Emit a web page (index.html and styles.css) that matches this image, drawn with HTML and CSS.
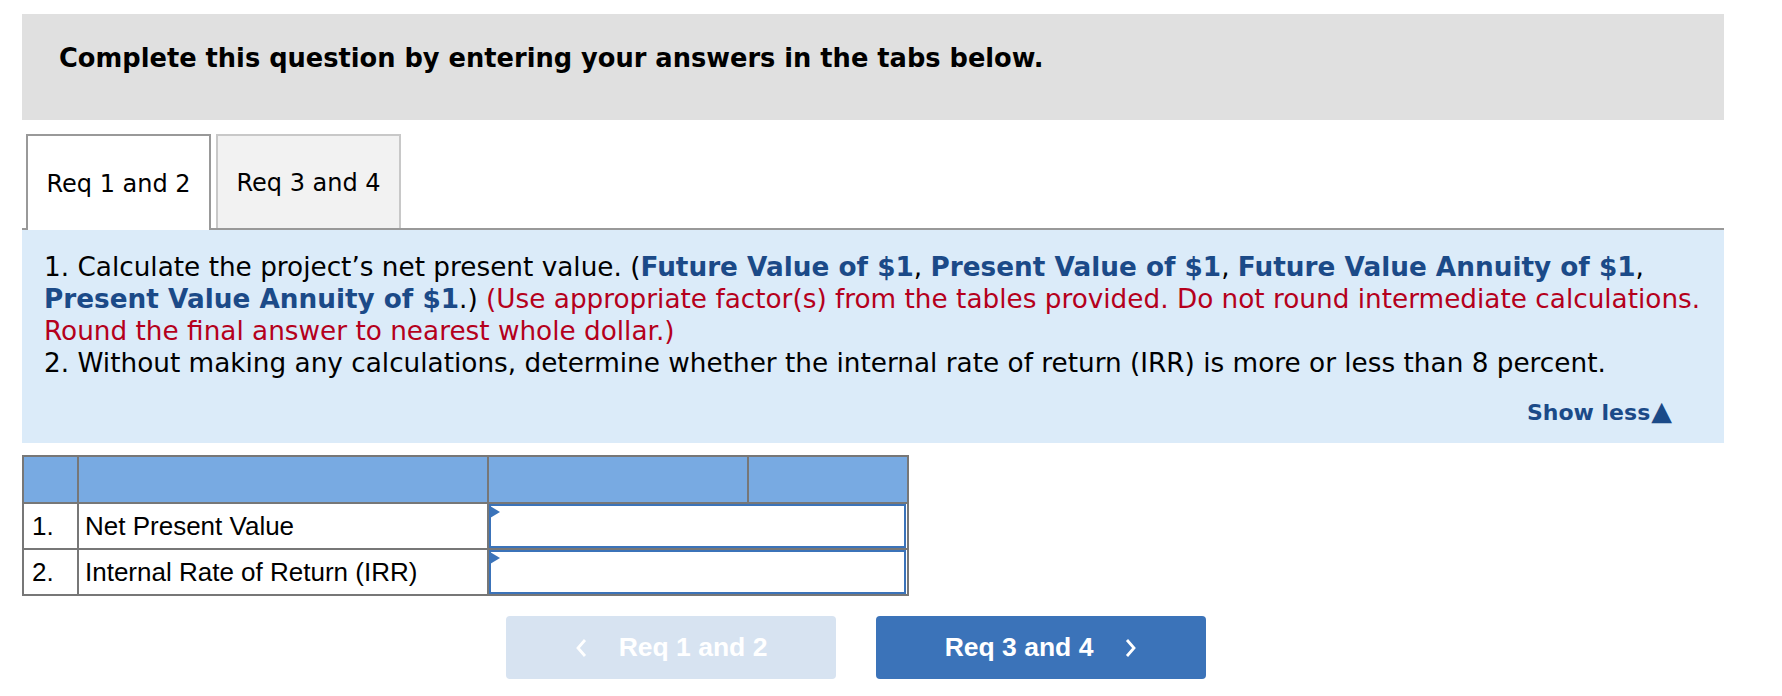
FILE: index.html
```html
<!DOCTYPE html>
<html lang="en">
<head>
    <meta charset="UTF-8">
    <title>Req 1 and 2</title>
    <link rel="stylesheet" href="styles.css">
</head>
<body>
    <div class="page">
        <div class="instructions">
            Complete this question by entering your answers in the tabs below.
        </div>

        <div class="tabs">
            <div class="tab active">Req 1 and 2</div>
            <div class="tab">Req 3 and 4</div>
        </div>

        <div class="question">
            <p>
                1. Calculate the project’s net present value. (<b>Future Value of $1</b>, <b>Present Value of $1</b>, <b>Future Value Annuity of $1</b>, <b>Present Value Annuity of $1</b>.) <span class="hint">(Use appropriate factor(s) from the tables provided. Do not round intermediate calculations. Round the final answer to nearest whole dollar.)</span><br>
                2. Without making any calculations, determine whether the internal rate of return (IRR) is more or less than 8 percent.
            </p>
            <div class="show-less">Show less<span class="arrow">▲</span></div>
        </div>

        <table class="answers">
            <colgroup>
                <col class="c-num">
                <col class="c-label">
                <col class="c-val">
                <col class="c-unit">
            </colgroup>
            <tr class="head">
                <th></th>
                <th></th>
                <th></th>
                <th></th>
            </tr>
            <tr>
                <td class="num">1.</td>
                <td class="label">Net Present Value</td>
                <td class="entry" colspan="2"><div class="field"><span class="flag"></span></div></td>
            </tr>
            <tr>
                <td class="num">2.</td>
                <td class="label">Internal Rate of Return (IRR)</td>
                <td class="entry" colspan="2"><div class="field"><span class="flag"></span></div></td>
            </tr>
        </table>

        <div class="nav">
            <button class="nav-btn prev">
                <svg class="chev" viewBox="0 0 12 20" width="12" height="20"><path d="M10 2 L3 10 L10 18" fill="none" stroke="#FFFFFF" stroke-width="2.8"/></svg>
                Req 1 and 2
            </button>
            <button class="nav-btn next">
                Req 3 and 4
                <svg class="chev" viewBox="0 0 12 20" width="12" height="20"><path d="M2 2 L9 10 L2 18" fill="none" stroke="#FFFFFF" stroke-width="2.8"/></svg>
            </button>
        </div>
    </div>
</body>
</html>
```

FILE: styles.css
```css
body {
    margin: 0;
    padding: 14px 58px 0 22px;
    background: #FFFFFF;
    color: #000000;
    font-family: "DejaVu Sans", Verdana, sans-serif;
}

/* Instruction bar */
.instructions {
    background: #E0E0E0;
    height: 106px;
    box-sizing: border-box;
    padding: 29px 37px;
    font-weight: bold;
    font-size: 25.7px;
    line-height: 30px;
}

/* Tabs */
.tabs {
    display: flex;
    gap: 5px;
    margin-top: 14px;
    padding-left: 4px;
    border-bottom: 2px solid #999999;
}

.tab {
    width: 185px;
    height: 94px;
    box-sizing: border-box;
    display: flex;
    align-items: center;
    justify-content: center;
    font-size: 24px;
    background: #F2F2F2;
    border: 2px solid #C8C8C8;
    border-bottom: none;
    padding-top: 2px;
}

.tab.active {
    background: #FFFFFF;
    border-color: #999999;
    height: 96px;
    margin-bottom: -2px;
}

/* Question text */
.question {
    background: #DBEBF9;
    padding: 21px 8px 14px 22px;
    font-size: 26.3px;
    line-height: 32px;
}

.question p {
    margin: 0;
}

.question b {
    color: #1B4A88;
}

.hint {
    color: #B5001C;
}

.show-less {
    margin-top: 16px;
    text-align: right;
    padding-right: 44px;
    font-weight: bold;
    color: #1B4A88;
    font-size: 22px;
}

.show-less .arrow {
    font-size: 27px;
    margin-left: 1px;
}

/* Answer table */
.answers {
    margin-top: 12px;
    border-collapse: collapse;
    font-family: "Liberation Sans", Arial, sans-serif;
    font-size: 26px;
}

.answers td,
.answers th {
    border: 2px solid #777777;
    padding: 0;
}

.c-num { width: 55px; }
.c-label { width: 410px; }
.c-val { width: 260px; }
.c-unit { width: 160px; }

.answers .head th {
    background: #78AAE2;
    height: 45px;
}

.answers td {
    height: 44px;
}

.num {
    padding-left: 8px !important;
}

.label {
    padding-left: 6px !important;
}

.entry {
    position: relative;
}

.field {
    height: 44px;
    margin: 0 1px 0 0;
    box-sizing: border-box;
    border: 2px solid #3B73B9;
    background: #FFFFFF;
}

.flag {
    position: absolute;
    left: 1px;
    top: 2px;
    width: 0;
    height: 0;
    border-top: 6px solid transparent;
    border-bottom: 6px solid transparent;
    border-left: 10px solid #3B73B9;
}

/* Navigation buttons */
.nav {
    display: flex;
    gap: 40px;
    margin-top: 20px;
    padding-left: 484px;
}

.nav-btn {
    width: 330px;
    height: 63px;
    border: none;
    border-radius: 4px;
    color: #FFFFFF;
    font-family: "Liberation Sans", Arial, sans-serif;
    font-weight: bold;
    font-size: 26.5px;
    display: flex;
    align-items: center;
    justify-content: center;
    gap: 32px;
}

.nav-btn.prev {
    background: #D7E3F1;
}

.nav-btn.next {
    background: #3B73B9;
}

.chev {
    display: block;
}
```
